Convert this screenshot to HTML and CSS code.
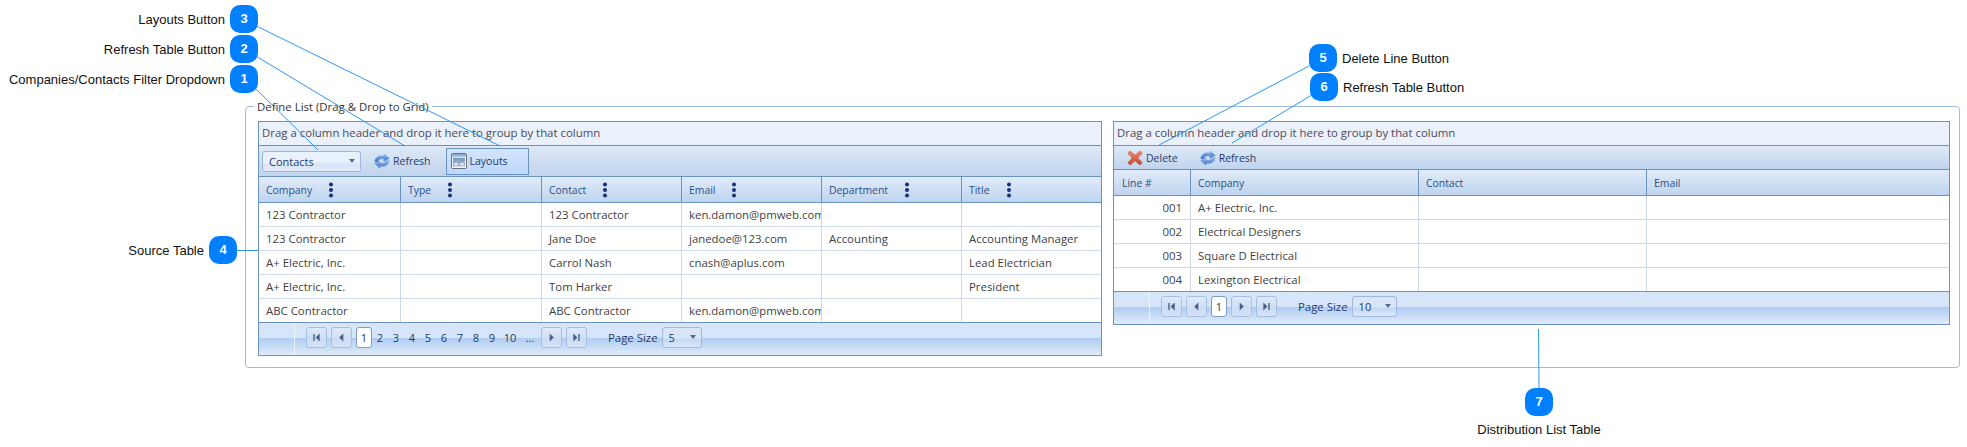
FILE: index.html
```html
<!DOCTYPE html>
<html lang="en">
<head>
<meta charset="utf-8">
<title>Define List</title>
<link rel="stylesheet" href="styles.css">
</head>
<body>
<svg class="defs" width="0" height="0" aria-hidden="true">
  <defs>
    <linearGradient id="blueA" x1="0" y1="0" x2="0" y2="1"><stop offset="0" stop-color="#9cc0ee"/><stop offset="1" stop-color="#3a70c4"/></linearGradient>
    <linearGradient id="redA" x1="0" y1="0" x2="0" y2="1"><stop offset="0" stop-color="#ee8a72"/><stop offset="1" stop-color="#c8432f"/></linearGradient>
    <symbol id="i-refresh" viewBox="0 0 16 16">
      <path d="M.6 9 C.8 4 5 1.6 9.5 2.8 L10 .4 L15.8 5.4 L9.5 8.6 L9.6 6.3 C7 5.4 4.6 6.3 3.8 9 Z" fill="url(#blueA)"/>
      <path d="M15.4 7 C15.2 12 11 14.4 6.5 13.2 L6 15.6 L.2 10.6 L6.5 7.4 L6.4 9.7 C9 10.6 11.4 9.7 12.2 7 Z" fill="url(#blueA)"/>
    </symbol>
    <symbol id="i-delete" viewBox="0 0 16 16">
      <path d="M3 .8 L8 5 L13 .8 L15.4 3.2 L11 8 L15.4 12.8 L13 15.2 L8 11 L3 15.2 L.6 12.8 L5 8 L.6 3.2 Z" fill="url(#redA)" stroke="#b8644f" stroke-width=".4"/>
    </symbol>
    <symbol id="i-layout" viewBox="0 0 16 16">
      <rect x=".5" y=".5" width="15" height="15" rx="1" fill="#f3f6fa" stroke="#66707e"/>
      <rect x="1" y="1" width="14" height="2.6" fill="#8fb0d8"/>
      <rect x="2.5" y="5" width="5.2" height="3.4" fill="#7fa2cc" stroke="#5c7899" stroke-width=".5"/>
      <rect x="8.6" y="5" width="5" height="3.4" fill="#7fa2cc" stroke="#5c7899" stroke-width=".5"/>
      <rect x="2.5" y="9.4" width="5.2" height="3.6" fill="#d5e1ef" stroke="#5c7899" stroke-width=".5"/>
      <rect x="8.6" y="9.4" width="5" height="3.6" fill="#d5e1ef" stroke="#5c7899" stroke-width=".5"/>
    </symbol>
    <symbol id="i-first" viewBox="0 0 21 21"><path d="M7 6.5h1.5v8H7zM14 6v9l-4.5-4.5z"/></symbol>
    <symbol id="i-prev" viewBox="0 0 21 21"><path d="M12.5 6v9L8 10.5z"/></symbol>
    <symbol id="i-next" viewBox="0 0 21 21"><path d="M8.5 6v9l4.5-4.5z"/></symbol>
    <symbol id="i-last" viewBox="0 0 21 21"><path d="M7 6v9l4.5-4.5zM12.5 6.5H14v8h-1.5z"/></symbol>
  </defs>
</svg>

<main class="page">
  <section class="frame">
    <span class="legend">Define List (Drag &amp; Drop to Grid)</span>

    <div class="grid grid-source">
      <div class="group-row">Drag a column header and drop it here to group by that column</div>
      <div class="toolbar toolbar-tall">
        <div class="combo combo-contacts">Contacts<span class="arrow"></span></div>
        <button class="tool tool-refresh"><svg class="ico"><use href="#i-refresh"/></svg>Refresh</button>
        <button class="tool tool-active"><svg class="ico"><use href="#i-layout"/></svg>Layouts</button>
      </div>
      <div class="row head cols-source">
        <div class="cell">Company<span class="dots"></span></div>
        <div class="cell">Type<span class="dots"></span></div>
        <div class="cell">Contact<span class="dots"></span></div>
        <div class="cell">Email<span class="dots"></span></div>
        <div class="cell">Department<span class="dots"></span></div>
        <div class="cell">Title<span class="dots"></span></div>
      </div>
      <div class="row cols-source"><div class="cell">123 Contractor</div><div class="cell"></div><div class="cell">123 Contractor</div><div class="cell">ken.damon@pmweb.com</div><div class="cell"></div><div class="cell"></div></div>
      <div class="row cols-source"><div class="cell">123 Contractor</div><div class="cell"></div><div class="cell">Jane Doe</div><div class="cell">janedoe@123.com</div><div class="cell">Accounting</div><div class="cell">Accounting Manager</div></div>
      <div class="row cols-source"><div class="cell">A+ Electric, Inc.</div><div class="cell"></div><div class="cell">Carrol Nash</div><div class="cell">cnash@aplus.com</div><div class="cell"></div><div class="cell">Lead Electrician</div></div>
      <div class="row cols-source"><div class="cell">A+ Electric, Inc.</div><div class="cell"></div><div class="cell">Tom Harker</div><div class="cell"></div><div class="cell"></div><div class="cell">President</div></div>
      <div class="row cols-source"><div class="cell">ABC Contractor</div><div class="cell"></div><div class="cell">ABC Contractor</div><div class="cell">ken.damon@pmweb.com</div><div class="cell"></div><div class="cell"></div></div>
      <div class="pager">
        <div class="pager-sep"></div>
        <div class="pg-btn"><svg><use href="#i-first"/></svg></div>
        <div class="pg-btn"><svg><use href="#i-prev"/></svg></div>
        <div class="pg-cur">1</div>
        <span class="pg-num">2</span><span class="pg-num">3</span><span class="pg-num">4</span><span class="pg-num">5</span><span class="pg-num">6</span><span class="pg-num">7</span><span class="pg-num">8</span><span class="pg-num">9</span><span class="pg-num pg-wide">10</span><span class="pg-num pg-wide">...</span>
        <div class="pg-btn pg-next"><svg><use href="#i-next"/></svg></div>
        <div class="pg-btn"><svg><use href="#i-last"/></svg></div>
        <span class="pg-label">Page Size</span>
        <div class="combo combo-size">5<span class="arrow"></span></div>
      </div>
    </div>

    <div class="grid grid-dist">
      <div class="group-row">Drag a column header and drop it here to group by that column</div>
      <div class="toolbar toolbar-short">
        <button class="tool tool-delete"><svg class="ico"><use href="#i-delete"/></svg>Delete</button>
        <button class="tool tool-refresh2"><svg class="ico"><use href="#i-refresh"/></svg>Refresh</button>
      </div>
      <div class="row head cols-dist">
        <div class="cell">Line #</div><div class="cell">Company</div><div class="cell">Contact</div><div class="cell">Email</div>
      </div>
      <div class="row cols-dist"><div class="cell num">001</div><div class="cell">A+ Electric, Inc.</div><div class="cell"></div><div class="cell"></div></div>
      <div class="row cols-dist"><div class="cell num">002</div><div class="cell">Electrical Designers</div><div class="cell"></div><div class="cell"></div></div>
      <div class="row cols-dist"><div class="cell num">003</div><div class="cell">Square D Electrical</div><div class="cell"></div><div class="cell"></div></div>
      <div class="row cols-dist"><div class="cell num">004</div><div class="cell">Lexington Electrical</div><div class="cell"></div><div class="cell"></div></div>
      <div class="pager">
        <div class="pager-sep"></div>
        <div class="pg-btn"><svg><use href="#i-first"/></svg></div>
        <div class="pg-btn"><svg><use href="#i-prev"/></svg></div>
        <div class="pg-cur">1</div>
        <div class="pg-btn pg-next-tight"><svg><use href="#i-next"/></svg></div>
        <div class="pg-btn"><svg><use href="#i-last"/></svg></div>
        <span class="pg-label">Page Size</span>
        <div class="combo combo-size combo-size-wide">10<span class="arrow"></span></div>
      </div>
    </div>
  </section>
</main>

<svg class="leaders" width="1967" height="447" aria-hidden="true">
  <line x1="257.5" y1="26.5" x2="500" y2="146"/>
  <line x1="257.5" y1="57" x2="405" y2="146"/>
  <line x1="256" y1="89" x2="318" y2="150"/>
  <line x1="237" y1="250.5" x2="258" y2="250.5"/>
  <line x1="1309" y1="66" x2="1159" y2="145"/>
  <line x1="1311" y1="95.5" x2="1232" y2="143"/>
  <line x1="1538.5" y1="329" x2="1539" y2="388"/>
</svg>

<div class="callout c3"><span class="c-label">Layouts Button</span><span class="badge">3</span></div>
<div class="callout c2"><span class="c-label">Refresh Table Button</span><span class="badge">2</span></div>
<div class="callout c1"><span class="c-label">Companies/Contacts Filter Dropdown</span><span class="badge">1</span></div>
<div class="callout c4"><span class="c-label">Source Table</span><span class="badge">4</span></div>
<div class="callout c5"><span class="badge">5</span><span class="c-label">Delete Line Button</span></div>
<div class="callout c6"><span class="badge">6</span><span class="c-label">Refresh Table Button</span></div>
<div class="callout-v c7"><span class="badge">7</span><span class="c-label">Distribution List Table</span></div>
</body>
</html>
```

FILE: styles.css
```css
* { box-sizing: border-box; }
html, body { margin: 0; padding: 0; background: #fff; }
body {
  width: 1967px;
  height: 447px;
  position: relative;
  overflow: hidden;
  font-family: "Open Sans", "Noto Sans", sans-serif;
  font-size: 11.4px;
  color: #3b3b3b;
}
.defs { position: absolute; }

.page { padding: 106px 8px 0 245px; }

.frame {
  position: relative;
  display: flex;
  align-items: flex-start;
  gap: 11px;
  width: 1715px;
  height: 262px;
  padding: 14px 9px 0 12px;
  border: 1px solid #9dbbdc;
  border-radius: 4px;
}
.legend {
  position: absolute;
  left: 8px;
  top: -8px;
  padding: 0 3px;
  background: #fff;
  color: #333;
  line-height: 16px;
}

.grid { border: 1px solid #6c92bf; background: #fff; flex: none; }
.grid-source { width: 844px; }
.grid-dist { width: 837px; }

.group-row {
  height: 24px;
  padding-left: 3px;
  line-height: 22px;
  background: #eaf1fb;
  border-bottom: 1px solid #6c92bf;
  color: #4a4a5a;
}

.toolbar {
  display: flex;
  align-items: center;
  background: linear-gradient(#dfe9f7, #bfd4ee);
  border-bottom: 1px solid #6c92bf;
  color: #1f3a6e;
  font-size: 10.5px;
}
.toolbar-tall { height: 31px; padding-left: 3px; }
.toolbar-short { height: 24px; padding-left: 13px; }

.tool {
  display: flex;
  align-items: center;
  font: inherit;
  color: inherit;
  padding: 0;
  border: 0;
  background: none;
}
.ico { width: 16px; height: 16px; margin-right: 3px; flex: none; }
.tool-refresh { margin-left: 13px; }
.tool-active {
  margin-left: 15px;
  width: 83px;
  height: 27px;
  padding-left: 4px;
  border: 1px solid #6c92bf;
  background: linear-gradient(#d3e4fb, #bcd8fb);
}
.tool-refresh2 { margin-left: 22px; }

.combo {
  position: relative;
  height: 21px;
  padding-left: 6px;
  line-height: 20px;
  border: 1px solid #9db9dc;
  border-radius: 3px;
  background: linear-gradient(#e9f1fc 0 50%, #d8e5f7 70%, #e6eefa);
  color: #1f3a6e;
}
.combo-contacts { width: 99px; font-size: 11px; }
.combo-size { width: 40px; background: linear-gradient(#d9e6f8 0 50%, #c3d8f4 60%, #dce8f9); }
.combo-size-wide { width: 45px; }
.arrow {
  position: absolute;
  right: 5px;
  top: 7px;
  width: 0;
  height: 0;
  border-left: 3.5px solid transparent;
  border-right: 3.5px solid transparent;
  border-top: 4px solid #566a90;
}

.row { display: grid; height: 24px; border-bottom: 1px solid #cdd8ea; }
.cols-source { grid-template-columns: 142px 141px 140px 140px 140px 1fr; }
.cols-dist { grid-template-columns: 77px 228px 228px 1fr; }
.cell {
  display: flex;
  align-items: center;
  padding-left: 7px;
  white-space: nowrap;
  overflow: hidden;
  border-right: 1px solid #cdd8ea;
  color: #3f3f3f;
}
.cell:last-child { border-right: 0; }
.cols-dist .cell:first-child { padding-left: 8px; }
.num { justify-content: flex-end; padding-right: 8px; }

.head {
  height: 26px;
  border-bottom: 1px solid #6c92bf;
  background: linear-gradient(#e1ebf9, #bed4ef);
  font-size: 10.4px;
}
.head .cell { border-right-color: #6c92bf; color: #2b4f86; }
.dots {
  width: 4px;
  height: 4px;
  margin-left: 17px;
  border-radius: 50%;
  background: #14327a;
  box-shadow: 0 -5.5px 0 #14327a, 0 5.5px 0 #14327a;
}

.pager {
  display: flex;
  align-items: center;
  height: 32px;
  padding-bottom: 4px;
  background: linear-gradient(#d6e5f8 0 46%, #b0ccf2 48%, #c4daf5 70%, #e0ebfa 100%);
  color: #1f3a6e;
  font-size: 11px;
}
.row:nth-last-child(2) { border-bottom-color: #6c92bf; }
.pager-sep {
  width: 36px;
  height: 32px;
  margin: 0 11px -4px 0;
  border-right: 1px solid #eef4fc;
  flex: none;
}
.pg-btn {
  width: 21px;
  height: 21px;
  margin-right: 4px;
  border: 1px solid #a6bfdf;
  border-radius: 3px;
  background: linear-gradient(#e0ebfa, #cbdcf4 60%, #d5e3f7);
  flex: none;
}
.pg-btn svg { display: block; width: 19px; height: 19px; fill: #4a5f85; }
.pg-cur {
  width: 16px;
  height: 21px;
  line-height: 19px;
  text-align: center;
  border: 1px solid #7d9cc6;
  border-radius: 3px;
  background: #fff;
  flex: none;
}
.pg-num { width: 16px; text-align: center; flex: none; }
.pg-wide { width: 20px; }
.pg-next { margin-left: 1px; }
.pg-next-tight { margin-left: 4px; }
.pg-label { margin: 0 4px 0 17px; white-space: nowrap; font-size: 11.4px; }

.leaders { position: absolute; left: 0; top: 0; pointer-events: none; }
.leaders line { stroke: #2f96f3; stroke-width: 1; }

.callout {
  position: absolute;
  display: flex;
  align-items: center;
  gap: 5px;
  height: 28px;
  font-family: "Liberation Sans", Arial, sans-serif;
  font-size: 13px;
  color: #111;
  white-space: nowrap;
}
.c3 { right: calc(1967px - 258px); top: 5px; }
.c2 { right: calc(1967px - 258px); top: 35px; }
.c1 { right: calc(1967px - 258px); top: 65px; }
.c4 { right: calc(1967px - 237px); top: 236px; }
.c5 { left: 1309px; top: 44px; }
.c6 { left: 1310px; top: 73px; }
.callout-v {
  position: absolute;
  left: 1439px;
  top: 388px;
  width: 200px;
  display: flex;
  flex-direction: column;
  align-items: center;
  gap: 6px;
  font-family: "Liberation Sans", Arial, sans-serif;
  font-size: 13px;
  color: #111;
}
.badge {
  width: 28px;
  height: 28px;
  border-radius: 10px;
  background: #0080ff;
  color: #fff;
  font-weight: 700;
  font-size: 13px;
  line-height: 28px;
  text-align: center;
  flex: none;
}
```
